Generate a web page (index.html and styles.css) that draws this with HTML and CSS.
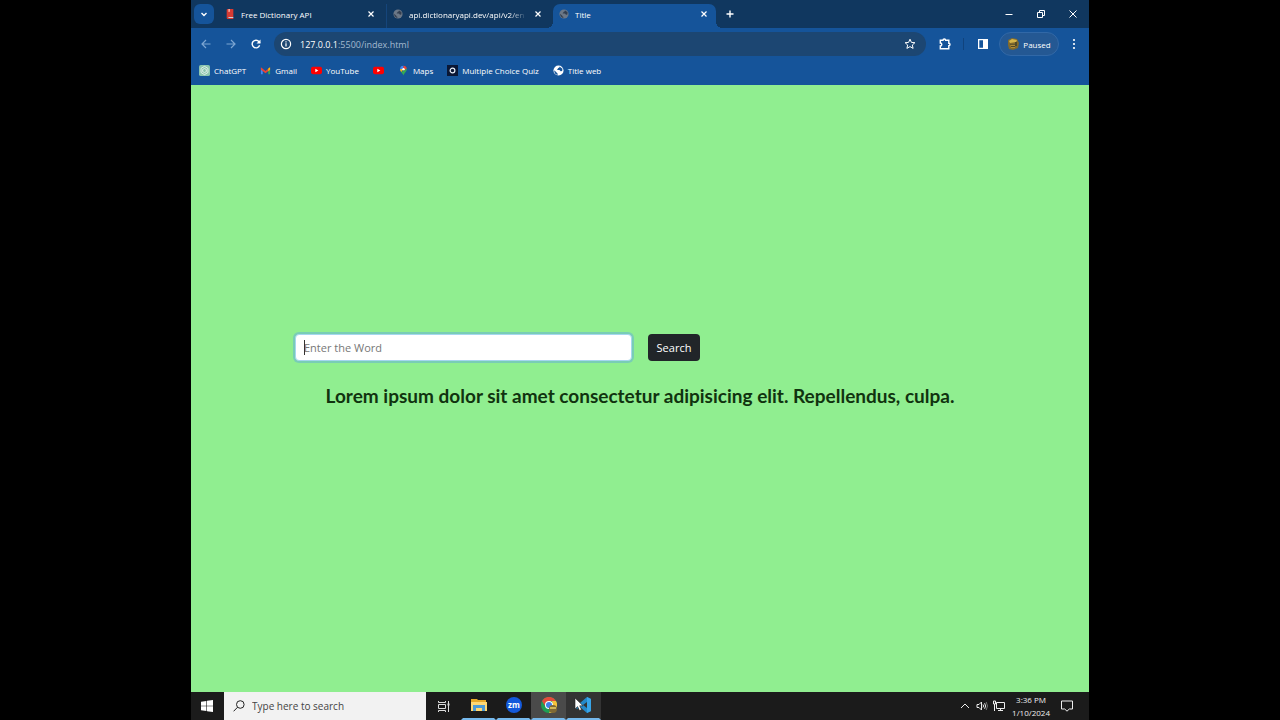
FILE: index.html
```html
<!DOCTYPE html>
<html lang="en">
<head>
    <meta charset="UTF-8">
    <meta name="viewport" content="width=device-width, initial-scale=1.0">
    <title>Title</title>
    <link rel="stylesheet" href="styles.css">
</head>

<body>
    <!-- Shared icons -->
    <svg class="symbols" aria-hidden="true">
        <symbol id="close" viewBox="0 0 10 10"><path d="M2.500 2.500l5 5M7.500 2.500l-5 5" fill="none" stroke="currentColor" stroke-width="1.200"/></symbol>
        <symbol id="globe" viewBox="0 0 12 12"><circle cx="6" cy="6" r="5.500" fill="currentColor"/><path d="M7 1.500c.5 1-.2 1.500-1.200 1.700-.6.200-.3 1-.9 1.300-.7.300-.5 1 .3 1h1.600c1 0 .9 1.300 1.700 1.400L10 6.500 10.300 4zM1.300 5.600l2.700 2.500c0 .8.700 1 1.200 1.300v1.300C2.800 10.300 1.200 8.300 1.300 5.600z" fill="var(--land)"/></symbol>
        <symbol id="youtube" viewBox="0 0 12 10"><rect y="1" width="12" height="8" rx="2" fill="#f00"/><path d="M4.700 3.200v3.600L8 5z" fill="#fff"/></symbol>
    </svg>

    <div class="screen">
        <div class="tab-strip">
            <button class="tab-search" aria-label="Search tabs"><svg viewBox="0 0 10 10"><path d="M2.500 4L5 6.500 7.500 4" fill="none" stroke="currentColor" stroke-width="1.400"/></svg></button>
            <div class="tab">
                <svg class="favicon" viewBox="0 0 12 12"><path d="M3 0h7v9.500H3.500v1H10V12H3.500A1.500 1.500 0 0 1 2 10.500V1z" fill="#d63a32"/><path d="M4 9.600h6v1H4z" fill="#eee"/><path d="M4 0h2v4l-1-1-1 1z" fill="#f6a59b"/></svg>
                <span class="tab-title">Free Dictionary API</span>
                <button class="tab-close" aria-label="Close tab"><svg><use href="#close"/></svg></button>
            </div>
            <div class="tab divided">
                <svg class="favicon world"><use href="#globe"/></svg>
                <span class="tab-title faded">api.dictionaryapi.dev/api/v2/en</span>
                <button class="tab-close" aria-label="Close tab"><svg><use href="#close"/></svg></button>
            </div>
            <div class="tab active">
                <svg class="favicon world"><use href="#globe"/></svg>
                <span class="tab-title">Title</span>
                <button class="tab-close" aria-label="Close tab"><svg><use href="#close"/></svg></button>
            </div>
            <button class="new-tab" aria-label="New tab"><svg viewBox="0 0 10 10"><path d="M5 1.500v7M1.500 5h7" stroke="currentColor" stroke-width="1.400"/></svg></button>
            <div class="window-buttons">
                <button aria-label="Minimize"><svg viewBox="0 0 10 10"><path d="M1.500 5.500h7" stroke="currentColor"/></svg></button>
                <button aria-label="Restore"><svg viewBox="0 0 10 10"><path d="M1.500 3.500h5v5h-5zM3.500 3.500v-2h5v5h-2" fill="none" stroke="currentColor"/></svg></button>
                <button aria-label="Close"><svg viewBox="0 0 10 10"><path d="M1.500 1.500l7 7M8.500 1.500l-7 7" stroke="currentColor"/></svg></button>
            </div>
        </div>

        <div class="toolbar">
            <button class="dim" aria-label="Back"><svg viewBox="0 0 12 12"><path d="M10.500 6H2M6 2L2 6l4 4" fill="none" stroke="currentColor" stroke-width="1.200"/></svg></button>
            <button class="dim" aria-label="Forward"><svg viewBox="0 0 12 12"><path d="M1.500 6H10M6 2l4 4-4 4" fill="none" stroke="currentColor" stroke-width="1.200"/></svg></button>
            <button aria-label="Reload"><svg viewBox="0 0 12 12"><path d="M9.600 7.200A3.800 3.800 0 1 1 9 3.700L10 4.800" fill="none" stroke="currentColor" stroke-width="1.400"/><path d="M10.500 1.500v4h-4z" fill="currentColor"/></svg></button>
            <div class="address">
                <svg viewBox="0 0 12 12"><circle cx="6" cy="6" r="4.600" fill="none" stroke="currentColor" stroke-width="1.200"/><path d="M6 5.300v3.200M6 3.300v1.200" stroke="currentColor" stroke-width="1.200"/></svg>
                <a class="url" href="#"><b>127.0.0.1</b>:5500/index.html</a>
                <button class="star" aria-label="Bookmark this page"><svg viewBox="0 0 12 12"><path d="M6 1.200l1.400 3.200 3.500.3-2.600 2.300.8 3.400L6 8.600l-3.100 1.800.8-3.400L1.100 4.700l3.500-.3z" fill="none" stroke="currentColor"/></svg></button>
            </div>
            <button class="extensions" aria-label="Extensions"><svg viewBox="0 0 12 12"><path d="M1.300 2.300H4a1.300 1.300 0 0 1 2.600 0h3.200v2.900a1.200 1.200 0 0 1 0 2.400v3.200H1.300V8a1.500 1.500 0 0 0 0-3z" fill="none" stroke="currentColor" stroke-width="1.400"/></svg></button>
            <span class="divider"></span>
            <button class="side-panel" aria-label="Side panel"><svg viewBox="0 0 12 12"><path d="M1 1h10v10H1zM2.300 2.300v7.400H6V2.300z" fill="currentColor" fill-rule="evenodd"/></svg></button>
            <button class="profile">
                <svg viewBox="0 0 12 12"><path d="M1 2l4-2 5 1 2 4-1 5-5 2-4-1-1-4z" fill="#826a2b"/><path d="M2 3l3-2 5 1-1 2-6 1z" fill="#d5b54a"/><path d="M3 5h5v5H4z" fill="#b08b35"/><path d="M3 5.500h6v1.200H3zM4 8h4v1H4zM8 4h2v4H8z" fill="#4e4929"/></svg>
                Paused
            </button>
            <button class="menu" aria-label="Menu"><svg viewBox="0 0 12 12"><g fill="currentColor"><circle cx="6" cy="2" r="1.100"/><circle cx="6" cy="6" r="1.100"/><circle cx="6" cy="10" r="1.100"/></g></svg></button>
        </div>

        <div class="bookmarks">
            <a href="#"><svg viewBox="0 0 12 12"><rect width="12" height="12" rx="2" fill="#8cc5ae"/><g fill="none" stroke="#fff" stroke-width=".8"><path d="M6 1.500l3.800 2.200v4.500L6 10.500 2.200 8.200V3.700zM6 3.800l2 1.100v2.300L6 8.300 4 7.200V4.900z"/></g></svg>ChatGPT</a>
            <a href="#"><svg viewBox="0 0 12 12"><path d="M1 3v7h2V5z" fill="#4285f4"/><path d="M11 3v7H9V5z" fill="#34a853"/><path d="M1 2.500L6 6.500l5-4v2.800L6 9 1 5.300z" fill="#ea4335"/><path d="M9 3.800l2-1.300v2.800L9 6.800z" fill="#fbbc04"/></svg>Gmail</a>
            <a href="#"><svg><use href="#youtube"/></svg>YouTube</a>
            <a href="#" aria-label="YouTube"><svg><use href="#youtube"/></svg></a>
            <a href="#"><svg viewBox="0 0 12 12"><path d="M2.300 4.500A3.700 3.700 0 0 1 6 .8v3.700L3.200 7z" fill="#4285f4"/><path d="M6 .8a3.700 3.700 0 0 1 3.600 3L6 7z" fill="#ea4335"/><path d="M2.300 4.500L6 4l-2.500 3.800C2.800 6.800 2.300 5.800 2.300 4.500z" fill="#fbbc04"/><path d="M9.600 3.800C10 7 7 8 6 11.500 5.500 9.500 4.500 9 3.500 7.800z" fill="#34a853"/><circle cx="6" cy="4.500" r="1.300" fill="#fff"/></svg>Maps</a>
            <a href="#"><svg viewBox="0 0 12 12"><rect width="12" height="12" fill="#0a1735"/><circle cx="6" cy="6" r="2.600" fill="none" stroke="#e7edf6" stroke-width="1.300"/></svg>Multiple Choice Quiz</a>
            <a href="#"><svg class="world-light"><use href="#globe"/></svg>Title web</a>
        </div>

        <main class="page">
            <form class="search">
                <div class="field">
                    <input type="text" placeholder="Enter the Word" aria-label="Enter the Word">
                    <span class="caret"></span>
                </div>
                <button type="submit">Search</button>
            </form>
            <h1>Lorem ipsum dolor sit amet consectetur adipisicing elit. Repellendus, culpa.</h1>
        </main>

        <div class="taskbar">
            <button class="start" aria-label="Start"><svg viewBox="0 0 12 12"><path d="M0 1.700l5.400-.8v4.800H0zM6 .8L12 0v5.700H6zM0 6.300h5.400v4.800L0 10.300zM6 6.300h6V12l-6-.8z" fill="#fff"/></svg></button>
            <label class="task-search">
                <svg viewBox="0 0 12 12"><circle cx="7.300" cy="4.500" r="3.800" fill="none" stroke="#222"/><path d="M4.600 7.200L.6 11.300" stroke="#222"/></svg>
                <input type="text" placeholder="Type here to search">
            </label>
            <button class="task" aria-label="Task view"><svg viewBox="0 0 12 12"><path d="M.5 1v1.500h7V1M.5 4.500h7v4h-7zM.5 12v-1.500h7V12M10.500 1v11" fill="none" stroke="#ddd"/><path d="M9.500 3.500h2v2h-2z" fill="#ddd"/></svg></button>
            <button class="task open" aria-label="File Explorer"><svg class="app" viewBox="0 0 16 16"><path d="M0 2h6l1 1h8v11H0z" fill="#e8a928"/><path d="M0 5h16v9H0z" fill="#ffd874"/><path d="M2 8h12v6h-3v-3H5v3H2z" fill="#4d9bd5"/></svg></button>
            <button class="task open" aria-label="Zoom"><svg class="app" viewBox="0 0 16 16"><circle cx="8" cy="8" r="8" fill="#1459db"/><text x="8" y="11" text-anchor="middle">zm</text></svg></button>
            <button class="task open current" aria-label="Chrome"><svg class="app" viewBox="0 0 16 16"><circle cx="8" cy="8" r="8" fill="#1e9e55"/><path d="M1 4a8 8 0 0 1 14 0H8a4 4 0 0 0-4 5z" fill="#e24a3c"/><path d="M15 4a8 8 0 0 1-7 12l4-7-1-5z" fill="#f6c23c"/><circle cx="8" cy="8" r="4" fill="#fff"/><circle cx="8" cy="8" r="3" fill="#3f7fe8"/><circle cx="12" cy="12" r="4" fill="#806935"/><path d="M9 10h6v2H9z" fill="#d2b65a"/></svg></button>
            <button class="task open hovered" aria-label="Visual Studio Code"><svg class="app" viewBox="0 0 16 16"><path d="M11 0l4 2v12l-4 2-7-6-3 2-1-1 3-3-3-3 1-1 3 2zM11 5L7 8l4 3z" fill="#2489ca" fill-rule="evenodd"/><path d="M11 0l4 2v12l-4 2z" fill="#38a4e8"/></svg>
                <svg class="cursor" viewBox="0 0 10 15"><path d="M1 1v11l2.600-2.400 1.900 4 2-1-1.800-3.800H9z" fill="#fff" stroke="#222" stroke-width=".6"/></svg></button>
            <div class="tray">
                <svg viewBox="0 0 12 12"><path d="M2 8l4-4 4 4" fill="none" stroke="currentColor"/></svg>
                <svg viewBox="0 0 12 12"><path d="M1 4.500h2L5.500 2v8L3 7.500H1z" fill="none" stroke="currentColor"/><path d="M7 4.500q1.200 1.500 0 3M8.600 3.200q2 2.800 0 5.600" fill="none" stroke="currentColor"/><path d="M10.200 2q2.600 4 0 8" fill="none" stroke="#777"/></svg>
                <svg viewBox="0 0 12 12"><path d="M3.500 2.500h8v6h-8zM7.500 8.500v2M5 10.500h5M.5 1v3h2V1zM1.500 4v7" fill="none" stroke="currentColor"/></svg>
                <div class="clock">3:36 PM<br>1/10/2024</div>
                <svg class="notice" viewBox="0 0 12 12"><path d="M.5 1h11v8H8.300L6 11.200 3.700 9H.5z" fill="none" stroke="currentColor"/></svg>
            </div>
        </div>
    </div>
</body>

</html>
```
FILE: styles.css
```css
/* General */
* {
    box-sizing: border-box;
}

body {
    margin: 0;
    background: #000;
    font-family: "Open Sans", "Noto Sans", sans-serif;
    font-size: 8px;
    color: #fff;
}

button {
    display: flex;
    align-items: center;
    justify-content: center;
    flex: none;
    padding: 0;
    border: 0;
    background: none;
    color: inherit;
    font: inherit;
}

a {
    color: inherit;
    text-decoration: none;
}

svg {
    display: block;
    flex: none;
    width: 12px;
    height: 12px;
}

.symbols {
    position: absolute;
    width: 0;
    height: 0;
}

.screen {
    display: flex;
    flex-direction: column;
    height: 100vh;
    aspect-ratio: 449 / 360;
    max-width: 100%;
    margin: 0 auto;
    background: #15549a;
}

/* Tabs */
.tab-strip {
    display: flex;
    align-items: flex-end;
    height: 28px;
    padding-left: 3px;
    background: #10375f;
}

.tab-search {
    width: 20px;
    height: 20px;
    margin: 0 5px 4px 0;
    border-radius: 6px;
    background: #15549a;
}

.tab {
    position: relative;
    display: flex;
    align-items: center;
    flex: 0 1 167px;
    min-width: 0;
    height: 24px;
    padding: 0 10px 4px 6px;
}

.tab.divided {
    border-left: 1px solid #15457b;
}

.tab.active {
    flex-basis: 163px;
    padding-right: 7px;
    border-radius: 7px 7px 0 0;
    background: #15549a;
}

/* Curved feet of the active tab */
.tab.active::before,
.tab.active::after {
    content: "";
    position: absolute;
    bottom: 0;
    width: 6px;
    height: 6px;
}

.tab.active::before {
    left: -6px;
    background: radial-gradient(circle at 0 0, transparent 6px, #15549a 6px);
}

.tab.active::after {
    right: -6px;
    background: radial-gradient(circle at 100% 0, transparent 6px, #15549a 6px);
}

.favicon {
    width: 10px;
    height: 10px;
    margin-right: 6px;
}

.world {
    color: #6c7887;
    --land: #333f50;
}

.world-light {
    color: #fff;
    --land: #15549a;
}

.tab-title {
    flex: 1;
    overflow: hidden;
    white-space: nowrap;
}

.faded {
    -webkit-mask-image: linear-gradient(to right, #000 85%, transparent);
    mask-image: linear-gradient(to right, #000 85%, transparent);
}

.tab-close {
    margin-left: 6px;
}

.tab-close svg,
.new-tab svg,
.tab-search svg,
.window-buttons svg {
    width: 10px;
    height: 10px;
}

.new-tab {
    width: 28px;
    height: 28px;
}

.window-buttons {
    display: flex;
    margin-left: auto;
}

.window-buttons button {
    width: 32px;
    height: 28px;
}

/* Toolbar */
.toolbar {
    display: flex;
    align-items: center;
    height: 32px;
    padding: 0 4px 0 2px;
}

.toolbar > button {
    width: 25px;
    height: 24px;
}

.toolbar .dim {
    color: #7da6d2;
}

.address {
    display: flex;
    align-items: center;
    gap: 8px;
    flex: 1;
    height: 24px;
    margin: 0 6px;
    padding: 0 10px 0 6px;
    border-radius: 12px;
    background: #1c4672;
}

.url {
    flex: 1;
    font-size: 9px;
    color: #a3b9d0;
}

.url b {
    font-weight: 400;
    color: #fff;
}

.divider {
    width: 1px;
    height: 12px;
    margin: 0 6px;
    background: #10437d;
}

.toolbar .profile {
    width: 60px;
    margin: 0 4px;
    gap: 4px;
    border: 1px solid #3168a7;
    border-radius: 12px;
    background: #245893;
}

.toolbar .menu {
    width: 22px;
}

/* Bookmarks */
.bookmarks {
    display: flex;
    align-items: center;
    gap: 14px;
    height: 25px;
    padding: 0 8px 4px;
    white-space: nowrap;
}

.bookmarks a {
    display: flex;
    align-items: center;
    gap: 4px;
}

.bookmarks svg {
    width: 11px;
    height: 11px;
}

/* Page */
.page {
    display: flex;
    flex-direction: column;
    justify-content: center;
    flex: 1;
    padding: 0 104px 36px;
    background: #90ee90;
}

.search {
    display: flex;
    gap: 16px;
}

.field {
    position: relative;
}

.search input {
    display: block;
    width: 337px;
    height: 27px;
    padding: 0 8px;
    border: 1px solid #a5d6ee;
    border-radius: 4px;
    outline: 0;
    box-shadow: 0 0 0 2px #79cdb5;
    background: #fff;
    font: 11px "Open Sans", sans-serif;
    color: #212529;
}

.search input::placeholder {
    color: #777;
}

/* Text cursor at the start of the field */
.caret {
    position: absolute;
    top: 6px;
    left: 9px;
    width: 1px;
    height: 15px;
    background: #333;
}

.search button {
    width: 52px;
    height: 27px;
    border-radius: 4px;
    background: #212529;
    font: 11px "Open Sans", sans-serif;
}

.page h1 {
    margin: 23px 0 0;
    font: 700 19px/24px Lato, sans-serif;
    text-align: center;
    color: #10330f;
}

/* Taskbar */
.taskbar {
    display: flex;
    height: 28px;
    background: #1b1b1b;
}

.start {
    width: 32px;
}

.task-search {
    display: flex;
    align-items: center;
    gap: 7px;
    flex: 0 1 203px;
    padding: 0 9px;
    border-left: 1px solid #1b1b1b;
    background: #f2f2f2;
}

.task-search input {
    width: 100%;
    padding: 0;
    border: 0;
    outline: 0;
    background: none;
    font: 10px "Open Sans", sans-serif;
}

.task-search input::placeholder {
    color: #444;
}

.task {
    position: relative;
    width: 35px;
}

.task .app {
    width: 16px;
    height: 16px;
}

.task text {
    font: 700 8px "Open Sans", sans-serif;
    fill: #fff;
}

.task.open {
    border-bottom: 2px solid #76b9ed;
    border-left: 2px solid #1b1b1b;
    border-right: 2px solid #1b1b1b;
}

.task.current {
    border-color: #4a4a4a;
    border-bottom-color: #76b9ed;
    background: #4a4a4a;
}

.task.hovered {
    border-color: #333;
    border-bottom-color: #76b9ed;
    background: #333;
}

.task .cursor {
    position: absolute;
    top: 5px;
    left: 6px;
    width: 10px;
    height: 15px;
}

.tray {
    display: flex;
    align-items: center;
    gap: 5px;
    margin-left: auto;
    padding-right: 16px;
    color: #eee;
}

.clock {
    padding: 0 2px;
    line-height: 13px;
    text-align: center;
}

.notice {
    margin-left: 4px;
}
```
